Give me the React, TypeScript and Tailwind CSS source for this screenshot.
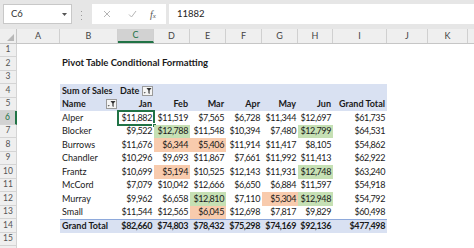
import React from "react";

type Cell = { t?: string; a?: "l" | "r"; bg?: string; b?: boolean; filter?: boolean; sel?: boolean; top?: boolean; title?: boolean };

const COLS = [43, 58, 36, 36, 36, 36, 36, 35, 54, 41, 40];
const LETTERS = ["A", "B", "C", "D", "E", "F", "G", "H", "I", "J", "K"];
const BLUE = "#d9e1f2";
const GREEN = "#c6e0b4";
const ORANGE = "#f8cbad";

const names = ["Alper", "Blocker", "Burrows", "Chandler", "Frantz", "McCord", "Murray", "Small"];
const values: string[][] = [
  ["$11,882", "$11,519", "$7,565", "$6,728", "$11,344", "$12,697", "$61,735"],
  ["$9,522", "$12,788", "$11,548", "$10,394", "$7,480", "$12,799", "$64,531"],
  ["$11,676", "$6,344", "$5,406", "$11,914", "$11,417", "$8,105", "$54,862"],
  ["$10,296", "$9,693", "$11,867", "$7,661", "$11,992", "$11,413", "$62,922"],
  ["$10,699", "$5,194", "$10,525", "$12,143", "$11,931", "$12,748", "$63,240"],
  ["$7,079", "$10,042", "$12,666", "$6,650", "$6,884", "$11,597", "$54,918"],
  ["$9,962", "$6,658", "$12,810", "$7,110", "$5,304", "$12,948", "$54,792"],
  ["$11,544", "$12,565", "$6,045", "$12,698", "$7,817", "$9,829", "$60,498"],
];
const highlights: Record<string, string> = {
  "1-1": GREEN,
  "2-1": ORANGE,
  "2-2": ORANGE,
  "4-1": ORANGE,
  "6-2": GREEN,
  "7-2": ORANGE,
  "1-5": GREEN,
  "4-5": GREEN,
  "6-4": ORANGE,
  "6-5": GREEN,
};
const totals = ["$82,660", "$74,803", "$78,432", "$75,298", "$74,169", "$92,136", "$477,498"];
const months = ["Jan", "Feb", "Mar", "Apr", "May", "Jun", "Grand Total"];

function buildRows(): Cell[][] {
  const rows: Cell[][] = [];
  for (let r = 1; r <= 15; r++) rows.push(LETTERS.map(() => ({})));
  const R = (n: number) => rows[n - 1];
  R(2)[1] = { t: "Pivot Table Conditional Formatting", a: "l", b: true, title: true };
  for (let c = 1; c <= 8; c++) {
    R(4)[c] = { bg: BLUE };
    R(5)[c] = { bg: BLUE };
  }
  R(4)[1] = { t: "Sum of Sales", a: "l", b: true, bg: BLUE };
  R(4)[2] = { t: "Date", a: "l", b: true, bg: BLUE, filter: true };
  R(5)[1] = { t: "Name", a: "l", b: true, bg: BLUE, filter: true };
  months.forEach((m, i) => (R(5)[2 + i] = { t: m, a: "r", b: true, bg: BLUE }));
  names.forEach((n, i) => {
    const row = R(6 + i);
    row[1] = { t: n, a: "l" };
    values[i].forEach((v, j) => {
      row[2 + j] = { t: v, a: "r", bg: highlights[`${i}-${j}`], sel: i === 0 && j === 0 };
    });
  });
  R(14)[1] = { t: "Grand Total", a: "l", b: true, bg: BLUE, top: true };
  totals.forEach((v, j) => (R(14)[2 + j] = { t: v, a: "r", b: true, bg: BLUE, top: true }));
  return rows;
}

function FilterBtn() {
  return (
    <span className="flex h-[10px] w-[11px] items-center justify-center border border-[#9a9a9a] bg-[#f4f4f4]">
      <svg width="9" height="8" viewBox="0 0 9 8">
        <path d="M0.6 5.2 H2.8 L1.7 6.6 Z" fill="#333" />
        <path d="M3.5 1 H8.5 L6.6 3.4 V7 L5.4 6.2 V3.4 Z" fill="#333" />
      </svg>
    </span>
  );
}

function SheetCell({ cell, w }: { cell: Cell; w: number }) {
  const style: React.CSSProperties = { width: w, backgroundColor: cell.bg };
  const isNum = !!cell.t && cell.t.startsWith("$");
  return (
    <div
      style={style}
      className={`relative flex h-full shrink-0 items-center whitespace-nowrap ${
        cell.a === "r" ? "justify-end pr-[2px]" : "justify-start pl-[2px]"
      } ${cell.b ? "font-bold" : ""} ${cell.top ? "border-t border-[#8ea9db]" : ""}`}
    >
      {cell.t && (
        <span className={`relative ${isNum ? "tracking-[-0.4px]" : ""} ${cell.title ? "text-[9.5px]" : ""}`}>{cell.t}</span>
      )}
      {cell.filter && (
        <span className="absolute right-[1px] top-1/2 -translate-y-1/2">
          <FilterBtn />
        </span>
      )}
      {cell.sel && (
        <>
          <span className="pointer-events-none absolute inset-[-1px] border-2 border-[#217346]" />
          <span className="absolute bottom-[-3px] right-[-3px] h-[5px] w-[5px] border border-white bg-[#217346]" />
        </>
      )}
    </div>
  );
}

export default function App() {
  const rows = buildRows();
  const rowH = (i: number) => (i % 2 === 0 ? 13 : 14);
  return (
    <div className="h-[248px] w-[474px] overflow-hidden bg-white text-[9px] text-[#1a1a1a]" style={{ fontFamily: "Lato, 'Open Sans', sans-serif" }}>
      {/* Formula bar */}
      <div className="flex h-[29px] items-start bg-[#e6e6e6] pt-[4px]">
        <div className="ml-[3px] flex h-[20px] w-[69px] items-center justify-between border border-[#c8c8c8] bg-white pl-[7px] pr-[4px] text-[9.5px] text-[#333]">
          <span>C6</span>
          <svg width="5" height="3" viewBox="0 0 5 3"><path d="M0 0 H5 L2.5 3 Z" fill="#555" /></svg>
        </div>
        <div className="ml-[9px] mt-[7px] flex h-[9px] w-[2px] flex-col justify-between">
          <span className="h-[1px] w-[1px] bg-[#9a9a9a]" />
          <span className="h-[1px] w-[1px] bg-[#9a9a9a]" />
          <span className="h-[1px] w-[1px] bg-[#9a9a9a]" />
        </div>
        <div className="ml-[9px] flex h-[20px] w-[74px] items-center bg-white">
          <svg className="ml-[11px]" width="8" height="8" viewBox="0 0 8 8"><path d="M1 1 L7 7 M7 1 L1 7" stroke="#b5b5b5" strokeWidth="1" /></svg>
          <svg className="ml-[17px]" width="9" height="8" viewBox="0 0 9 8"><path d="M1 4.5 L3.5 7 L8 1" stroke="#b5b5b5" strokeWidth="1" fill="none" /></svg>
          <span className="ml-[13px] text-[10px] italic text-[#555]" style={{ fontFamily: "'Liberation Serif', serif" }}>f<span className="text-[7px]">x</span></span>
        </div>
        <div className="ml-[3px] flex h-[20px] flex-1 items-center bg-white pl-[8px] text-[9.5px] text-[#222]">11882</div>
      </div>
      {/* Column headers */}
      <div className="flex h-[14.5px] border-b border-[#c6c6c6] bg-[#efefef] text-[9px] text-[#444]">
        <div className="relative w-[17px] shrink-0 border-r border-[#c6c6c6]">
          <svg className="absolute bottom-[2px] right-[2px]" width="7" height="7" viewBox="0 0 7 7"><path d="M7 0 V7 H0 Z" fill="#b8b8b8" /></svg>
        </div>
        {LETTERS.map((l, i) => (
          <div
            key={l}
            style={{ width: COLS[i] }}
            className={`flex shrink-0 items-center justify-center border-r border-[#d0d0d0] ${
              l === "C" ? "border-b-2 border-b-[#217346] bg-[#d2d2d2] text-[#217346]" : ""
            }`}
          >
            {l}
          </div>
        ))}
        <div className="flex-1" />
      </div>
      {/* Rows */}
      {rows.map((row, ri) => (
        <div key={ri} className="flex" style={{ height: rowH(ri) }}>
          <div
            className={`flex w-[17px] shrink-0 items-center justify-center border-b border-r border-[#d4d4d4] text-[8.5px] ${
              ri === 5 ? "border-r-2 border-r-[#217346] bg-[#d2d2d2] text-[#217346]" : "bg-[#efefef] text-[#555]"
            }`}
          >
            {ri + 1}
          </div>
          {row.map((c, ci) => (
            <SheetCell key={ci} cell={c} w={COLS[ci]} />
          ))}
        </div>
      ))}
      <div className="flex h-[10px]">
        <div className="w-[17px] shrink-0 border-r border-[#d4d4d4] bg-[#efefef]" />
      </div>
    </div>
  );
}
